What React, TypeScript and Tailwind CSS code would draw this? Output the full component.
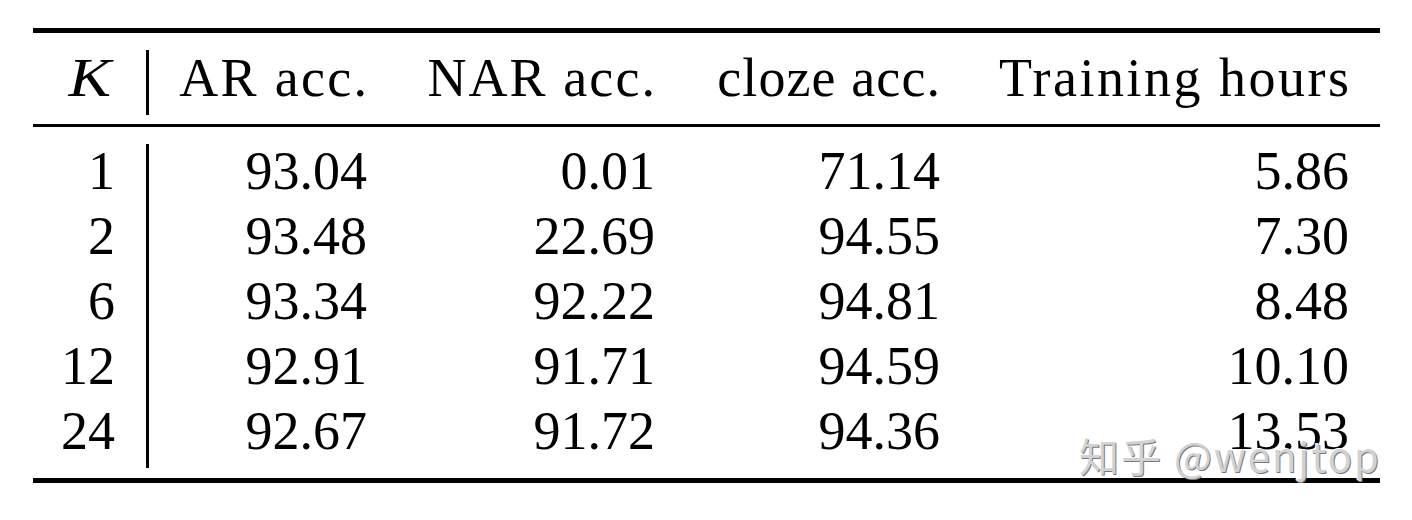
import React from "react";

const rows = [
  ["1", "93.04", "0.01", "71.14", "5.86"],
  ["2", "93.48", "22.69", "94.55", "7.30"],
  ["6", "93.34", "92.22", "94.81", "8.48"],
  ["12", "92.91", "91.71", "94.59", "10.10"],
  ["24", "92.67", "91.72", "94.36", "13.53"],
];

const colW = ["w-[218.5px]", "w-[288px]", "w-[285px]", "w-[409px]"];

const headers = [
  { t: "AR acc.", c: "tracking-[2.3px] mr-[-2.3px]" },
  { t: "NAR acc.", c: "tracking-[2.1px] mr-[-2.1px]" },
  { t: "cloze acc.", c: "tracking-[1.1px] mr-[-1.1px]" },
  { t: "Training hours", c: "tracking-[2.5px] mr-[-2.5px]" },
];

export default function App() {
  return (
    <div
      className="relative w-[1412px] h-[520px] bg-white text-black overflow-hidden"
      style={{ fontFamily: '"Liberation Serif", "Times New Roman", serif' }}
    >
      <div className="pt-[28px] pl-[33px]">
        <div className="w-[1347px]">
          {/* top rule */}
          <div className="h-[5px] bg-black" />
          {/* header */}
          <div className="flex items-stretch text-[54px] leading-[65px]">
            <div className="w-[113px] pr-[35px] pt-[13px] pb-[13px] text-right italic">
              <span className="inline-block scale-x-[1.18] origin-right">K</span>
            </div>
            <div className="w-[2.5px] bg-black mt-[17px] mb-[9px]" />
            {headers.map((h, i) => (
              <div key={h.t} className={`${colW[i]} pt-[13px] pb-[13px] text-right`}>
                <span className={h.c}>{h.t}</span>
              </div>
            ))}
          </div>
          {/* mid rule */}
          <div className="h-[3px] bg-black" />
          {/* body */}
          <div className="flex items-stretch text-[54px] leading-[65px]">
            <div className="w-[113px] pr-[31px] pt-[12px] pb-[14px] text-right flex flex-col">
              {rows.map((r) => (
                <div key={r[0]}>{r[0]}</div>
              ))}
            </div>
            <div className="w-[2.5px] bg-black mt-[17px] mb-[10px]" />
            {[1, 2, 3, 4].map((c) => (
              <div key={c} className={`${colW[c - 1]} pt-[12px] pb-[14px] text-right flex flex-col`}>
                {rows.map((r) => (
                  <div key={r[0]}>{r[c]}</div>
                ))}
              </div>
            ))}
          </div>
          {/* bottom rule */}
          <div className="h-[5px] bg-black" />
        </div>
      </div>
      {/* watermark */}
      <div
        className="absolute left-[1079px] top-[430px] text-[40px] leading-[50px] tracking-[2px] text-[#d2d2d2] whitespace-nowrap"
        style={{
          fontFamily: '"Noto Sans CJK SC", "Noto Sans", sans-serif',
          textShadow: "1px 1px 0 #7a7a7a, -1px -1px 0 #ffffff",
        }}
      >
        知乎 @wenjtop
      </div>
    </div>
  );
}
